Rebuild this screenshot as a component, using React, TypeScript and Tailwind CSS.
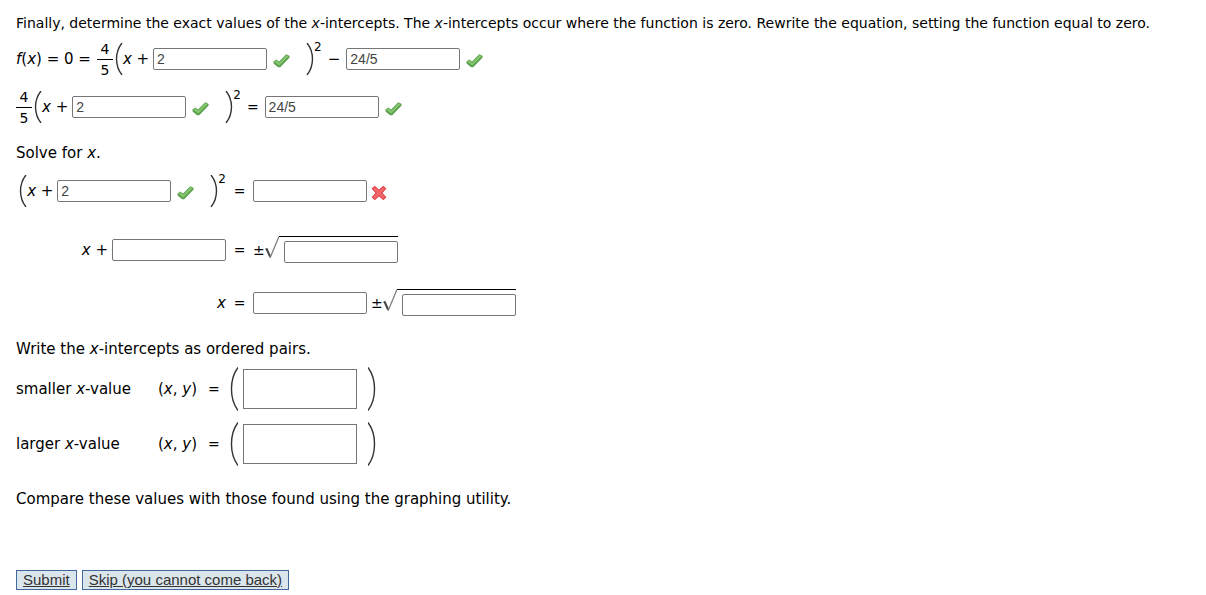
import type { ReactNode } from "react";

const X = () => <i>x</i>;

const Check = () => (
  <svg className="mt-1 h-4 w-[17px] shrink-0" viewBox="0 0 17 16" role="img" aria-label="Correct">
    <path d="M.3 8.7 3.2 6.4 6.1 8.6 13.2 1.2 16.7 3 16.4 4.8 7.2 14.2 5.2 14.2 .8 10.8Z" fill="#5ba04e" />
    <path d="M1.4 8.8 3.3 7.3 6.2 9.8 13.4 2.3 15.6 3.2 6.3 12.4Z" fill="#86c66f" />
  </svg>
);

const Cross = () => (
  <svg className="mt-1 h-4 w-4 shrink-0" viewBox="0 0 16 16" role="img" aria-label="Incorrect">
    <path
      d="M3.7.8 8 4.4 12.3.8 15.4 3.5 11.6 8 15.4 12.2 12.4 15.2 8 11.6 3.7 15.2.6 12.3 4.4 8 .6 3.6Z"
      fill="#e0434b"
    />
    <path d="M3.7 2 8 5.7 12.3 2 14 3.6 10.2 8 14 12.2 12.4 13.9 8 10.2 3.7 13.9 2 12.3 5.8 8 2 3.6Z" fill="#f2676a" />
  </svg>
);

// stretchy delimiter, used around the squared terms
const Paren = ({ right = false }: { right?: boolean }) => (
  <svg className="h-8 w-2 shrink-0" viewBox="0 0 8 32" fill="none" stroke="#333" aria-hidden="true">
    <path d={right ? "M1 0C8.3 9 8.3 23 1 32" : "M7 0C-.3 9-.3 23 7 32"} strokeWidth="1.4" />
  </svg>
);

const BigParen = ({ right = false }: { right?: boolean }) => (
  <svg className="h-11 w-2 shrink-0" viewBox="0 0 8 44" fill="none" stroke="#333" aria-hidden="true">
    <path d={right ? "M0 .5C8.7 12 8.7 32 0 43.5" : "M8 .5C-.7 12-.7 32 8 43.5"} strokeWidth="1.4" />
  </svg>
);

const Field = ({ label, value = "" }: { label: string; value?: string }) => (
  <input
    type="text"
    aria-label={label}
    defaultValue={value}
    className="h-[22px] w-[114px] shrink-0 rounded-[2px] border border-[#767676] bg-white px-[3px] font-['Liberation_Sans',sans-serif] text-sm text-[#444]"
  />
);

const Fraction = () => (
  <span className="mr-0.5 flex w-4 flex-col text-center text-sm leading-5">
    <span className="border-b border-black">4</span>
    <span>5</span>
  </span>
);

// (x + [ ])^2
const Squared = ({ label }: { label: string }) => (
  <span className="flex items-center">
    <Paren />
    <span className="mr-1">
      <X /> +
    </span>
    <Field label={label} value="2" />
    <span className="mr-4 ml-1.5">
      <Check />
    </span>
    <Paren right />
    <sup className="top-0 mb-6 text-xs leading-4">2</sup>
  </span>
);

const Root = ({ label }: { label: string }) => (
  <span className="flex">
    <svg className="h-6 w-3.5 shrink-0" viewBox="0 0 14 24" fill="none" aria-hidden="true">
      <path d="M0 13.5 2 12" stroke="#777" />
      <path d="M1.5 12.5 5 20.5" stroke="#444" strokeWidth="2" />
      <path d="M5 22 14 .5" stroke="#777" strokeWidth="1.2" />
    </svg>
    <span className="border-t border-black pt-[3px] pl-[5px]">
      <Field label={label} />
    </span>
  </span>
);

const Equation = ({ left, children }: { left: ReactNode; children: ReactNode }) => (
  <div className="grid grid-cols-[210px_27px_auto] items-center justify-start">
    <div className="flex items-center justify-end gap-1">{left}</div>
    <span className="text-center text-sm">=</span>
    <div className="flex items-center">{children}</div>
  </div>
);

const Pair = ({ name }: { name: string }) => (
  <div className="flex h-[55px] items-center">
    <label htmlFor={name} className="w-[142px]">
      {name} <X />
      -value
    </label>
    <span className="w-[50px]">
      (<X />, <i>y</i>)
    </span>
    <span className="w-[22px] text-sm">=</span>
    <BigParen />
    <textarea
      id={name}
      className="mx-[5px] h-10 w-[114px] resize-none border border-[#767676] bg-white p-1 font-['Liberation_Sans',sans-serif] text-sm"
    />
    <span className="ml-1.5 flex">
      <BigParen right />
    </span>
  </div>
);

const buttonClass =
  "h-5 border border-[#41699f] bg-[#dbe5ec] px-1.5 font-['Liberation_Sans',sans-serif] text-[15px] leading-[18px] text-[#333] underline";

export default function App() {
  return (
    <main className="bg-white px-4 pt-[11px] font-['DejaVu_Sans',Verdana,sans-serif] text-[15px] leading-6 text-black">
      <p className="-mr-4 text-sm leading-6">
        Finally, determine the exact values of the <X />
        -intercepts. The <X />
        -intercepts occur where the function is zero. Rewrite the equation, setting the function equal to zero.
      </p>

      <div className="flex h-12 items-center">
        <span className="mr-1.5">
          <i>f</i>(<X />) = 0 =
        </span>
        <Fraction />
        <Squared label="Horizontal shift" />
        <span className="mx-1.5">−</span>
        <Field label="Constant" value="24/5" />
        <span className="ml-1.5">
          <Check />
        </span>
      </div>
      <div className="flex h-12 items-center">
        <Fraction />
        <Squared label="Horizontal shift, step 2" />
        <span className="mx-1.5 text-sm">=</span>
        <Field label="Right side, step 2" value="24/5" />
        <span className="ml-1.5">
          <Check />
        </span>
      </div>

      <p className="mt-2.5 mb-1.5">
        Solve for <X />.
      </p>
      <div className="flex flex-col gap-[25px]">
        <Equation left={<Squared label="Horizontal shift, step 3" />}>
          <Field label="Right side, step 3" />
          <span className="ml-1">
            <Cross />
          </span>
        </Equation>
        <Equation
          left={
            <>
              <span>
                <X /> +
              </span>
              <Field label="Shift after taking the root" />
            </>
          }
        >
          <span className="text-sm">±</span>
          <Root label="Radicand" />
        </Equation>
        <Equation left={<X />}>
          <Field label="Solution constant" />
          <span className="ml-1 text-sm">±</span>
          <Root label="Solution radicand" />
        </Equation>
      </div>

      <p className="mt-5">
        Write the <X />
        -intercepts as ordered pairs.
      </p>
      <Pair name="smaller" />
      <Pair name="larger" />

      <p className="mt-4">Compare these values with those found using the graphing utility.</p>

      <div className="mt-[59px] flex gap-[5px]">
        <button type="button" className={buttonClass}>
          Submit
        </button>
        <button type="button" className={buttonClass}>
          Skip (you cannot come back)
        </button>
      </div>
    </main>
  );
}
